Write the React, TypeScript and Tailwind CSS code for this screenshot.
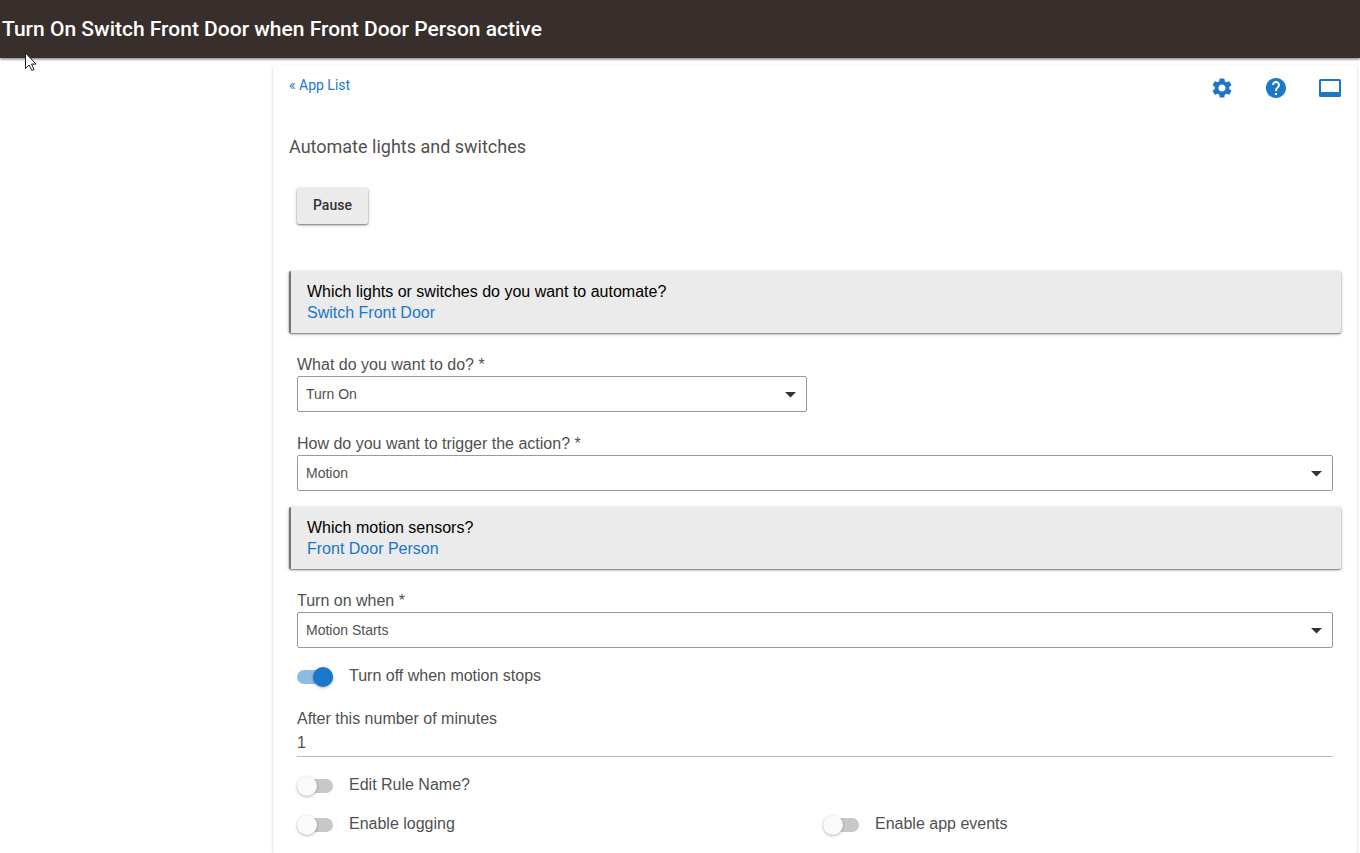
import React, { useId, useState } from 'react';
import { MdHelp, MdSettings } from 'react-icons/md';

interface SelectFieldProps {
    label: string;
    options: string[];
    className?: string;
}

const SelectField: React.FC<SelectFieldProps> = ({ label, options, className = '' }) => {
    const id = useId();
    const [value, setValue] = useState(options[0]);

    return (
        <div className={`px-2 ${className}`}>
            <label htmlFor={id} className="block pt-[2px] leading-[22px] text-[#505050]">{label}</label>
            <div className="relative">
                <select
                    id={id}
                    value={value}
                    onChange={e => setValue(e.target.value)}
                    className="block w-full h-9 pl-2 pr-8 appearance-none bg-white border border-[#999] rounded-xs text-sm text-[#505050]"
                >
                    {options.map(option => (
                        <option key={option}>{option}</option>
                    ))}
                </select>
                <svg className="absolute right-[10px] top-4 pointer-events-none" width="12" height="6" viewBox="0 0 12 6">
                    <path d="M0 0h11L5.5 5.5z" fill="#333" />
                </svg>
            </div>
        </div>
    );
};

const DeviceButton: React.FC<{ title: string; device: string }> = ({ title, device }) => (
    <button
        type="button"
        className="block w-full px-4 py-[10px] text-left leading-[21px] bg-[#ebebeb] border-l-2 border-[#757575] rounded-xs shadow-[0_1px_2px_rgba(0,0,0,0.5),0_1px_5px_rgba(0,0,0,0.12)]"
    >
        <span className="block text-black">{title}</span>
        <span className="block text-[#1a77c9]">{device}</span>
    </button>
);

const Toggle: React.FC<{ label: string; defaultOn?: boolean }> = ({ label, defaultOn = false }) => {
    const [on, setOn] = useState(defaultOn);

    return (
        <label className="flex items-start gap-4 px-2 h-6 cursor-pointer">
            <span className="relative flex items-center w-9 h-6">
                <input
                    type="checkbox"
                    checked={on}
                    onChange={e => setOn(e.target.checked)}
                    className="peer w-9 h-[14px] appearance-none rounded-full bg-[#c8c8c8] checked:bg-[#8dbbe4]"
                />
                <span className="absolute left-0 top-[2px] w-5 h-5 rounded-full pointer-events-none bg-[#fafafa] shadow-[0_1px_3px_rgba(0,0,0,0.3)] peer-checked:left-4 peer-checked:bg-[#1a77c9]" />
            </span>
            <span className="leading-[22px] text-[#505050]">{label}</span>
        </label>
    );
};

const PanelIcon: React.FC = () => (
    <svg width="24" height="24" viewBox="0 0 24 24" fill="currentColor">
        <path fillRule="evenodd" d="M2.5 3h19A1.5 1.5 0 0 1 23 4.5v15a1.5 1.5 0 0 1-1.5 1.5h-19A1.5 1.5 0 0 1 1 19.5v-15A1.5 1.5 0 0 1 2.5 3zM3 5v11h18V5z" />
    </svg>
);

const App: React.FC = () => {
    const [minutes, setMinutes] = useState('1');

    return (
        <div className="min-h-screen flex flex-col bg-white font-['Liberation_Sans',Arial,sans-serif] text-base">
            <header className="relative h-[58px] flex items-center px-[2px] bg-[#382e2c] shadow-[0_1px_3px_rgba(0,0,0,0.6)]">
                <h1 className="font-[Roboto,sans-serif] text-[21px] leading-7 font-medium text-white">
                    Turn On Switch Front Door when Front Door Person active
                </h1>
                {/* Mouse pointer */}
                <svg className="absolute left-6 top-[52px]" width="13" height="20" viewBox="0 0 13 20">
                    <path
                        d="M1.5 1v15.5l3.6-3.5 2.7 5.5 2.3-1-2.6-5.4h4.5z"
                        fill="#fff"
                        stroke="#1c1c28"
                        strokeWidth="1"
                    />
                </svg>
            </header>

            <div className="flex flex-1 pt-2 pr-[3px]">
                <aside className="w-[273px] shrink-0" />

                <main className="flex-1 px-4 pt-[10px] pb-4 rounded-xs shadow-[0_1px_3px_rgba(0,0,0,0.22)]">
                    <nav className="flex items-start justify-between -mr-px font-[Roboto,sans-serif] text-[#1a77c9]">
                        <a href="#apps" className="text-sm leading-[18px]">« App List</a>
                        <div className="flex gap-[30px]">
                            <button type="button" aria-label="Settings"><MdSettings size={24} /></button>
                            <button type="button" aria-label="Help"><MdHelp size={24} /></button>
                            <button type="button" aria-label="Display"><PanelIcon /></button>
                        </div>
                    </nav>

                    <h2 className="mt-[35px] font-[Roboto,sans-serif] text-lg leading-6 text-[#505050]">
                        Automate lights and switches
                    </h2>

                    <button
                        type="button"
                        className="block mt-[29px] ml-2 h-9 px-4 pb-[2px] bg-[#ebebeb] rounded-xs font-[Roboto,sans-serif] text-sm font-medium text-[#333] shadow-[0_1px_2px_rgba(0,0,0,0.5),0_1px_5px_rgba(0,0,0,0.12)]"
                    >
                        Pause
                    </button>

                    <form className="mt-[47px]" onSubmit={e => e.preventDefault()}>
                        <DeviceButton title="Which lights or switches do you want to automate?" device="Switch Front Door" />

                        <div className="grid grid-cols-2 mt-[19px]">
                            <SelectField label="What do you want to do? *" options={['Turn On', 'Turn Off']} />
                        </div>
                        <SelectField
                            className="mt-[19px] mb-4"
                            label="How do you want to trigger the action? *"
                            options={['Motion', 'Contact', 'Switch']}
                        />

                        <DeviceButton title="Which motion sensors?" device="Front Door Person" />

                        <SelectField
                            className="mt-[19px] mb-[17px]"
                            label="Turn on when *"
                            options={['Motion Starts', 'Motion Stops']}
                        />

                        <Toggle label="Turn off when motion stops" defaultOn />

                        <div className="mt-4 mb-[17px] px-2">
                            <label htmlFor="minutes" className="block pt-[2px] leading-6 text-[#505050]">
                                After this number of minutes
                            </label>
                            <input
                                id="minutes"
                                type="text"
                                inputMode="numeric"
                                value={minutes}
                                onChange={e => setMinutes(e.target.value)}
                                className="block w-full h-[26px] pb-[2px] border-b border-[#bbb] text-[#505050]"
                            />
                        </div>

                        <div className="grid grid-cols-2 gap-y-[15px]">
                            <div className="col-span-2"><Toggle label="Edit Rule Name?" /></div>
                            <Toggle label="Enable logging" />
                            <Toggle label="Enable app events" />
                        </div>
                    </form>
                </main>
            </div>
        </div>
    );
};

export default App;
